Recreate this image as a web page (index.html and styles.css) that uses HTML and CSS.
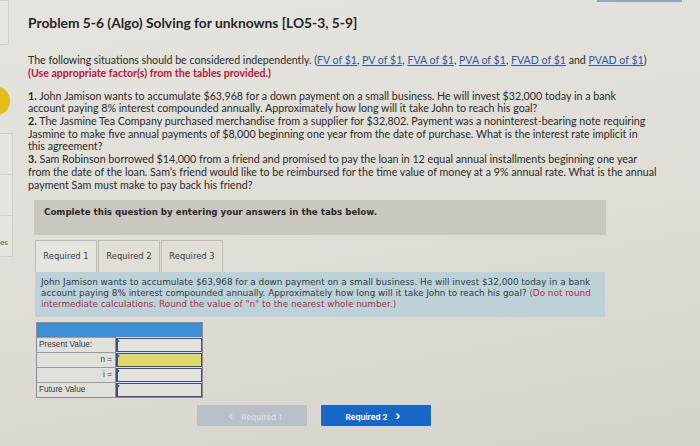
FILE: index.html
```html
<!DOCTYPE html>
<html>
<head>
<meta charset="utf-8">
<link rel="stylesheet" href="styles.css">
</head>
<body>
<div class="page">
  <div class="side">
    <div class="side-top"></div>
    <div class="side-dot"></div>
    <div class="side-panel">
      <div class="side-seg"></div>
      <div class="side-seg"></div>
      <div class="side-seg last"><span>es</span></div>
    </div>
  </div>
  <div class="main">
    <div class="topbar"></div>
    <h1 class="title">Problem 5-6 (Algo) Solving for unknowns [LO5-3, 5-9]</h1>
    <p class="intro">The following situations should be considered independently. (<a href="#">FV of $1</a>, <a href="#">PV of $1</a>, <a href="#">FVA of $1</a>, <a href="#">PVA of $1</a>, <a href="#">FVAD of $1</a> and <a href="#">PVAD of $1</a>)<br><strong class="red">(Use appropriate factor(s) from the tables provided.)</strong></p>
    <p class="items"><b>1.</b> John Jamison wants to accumulate $63,968 for a down payment on a small business. He will invest $32,000 today in a bank<br>account paying 8% interest compounded annually. Approximately how long will it take John to reach his goal?<br><b>2.</b> The Jasmine Tea Company purchased merchandise from a supplier for $32,802. Payment was a noninterest-bearing note requiring<br>Jasmine to make five annual payments of $8,000 beginning one year from the date of purchase. What is the interest rate implicit in<br>this agreement?<br><b>3.</b> Sam Robinson borrowed $14,000 from a friend and promised to pay the loan in 12 equal annual installments beginning one year<br>from the date of the loan. Sam’s friend would like to be reimbursed for the time value of money at a 9% annual rate. What is the annual<br>payment Sam must make to pay back his friend?</p>
    <div class="prompt">Complete this question by entering your answers in the tabs below.</div>
    <div class="tabs">
      <div class="tab active">Required 1</div>
      <div class="tab">Required 2</div>
      <div class="tab">Required 3</div>
    </div>
    <div class="question">John Jamison wants to accumulate $63,968 for a down payment on a small business. He will invest $32,000 today in a bank<br>account paying 8% interest compounded annually. Approximately how long will it take John to reach his goal? <span class="red">(Do not round<br>intermediate calculations. Round the value of "n" to the nearest whole number.)</span></div>
    <div class="grid">
      <div class="ghead"></div>
      <div class="glabel">Present Value:</div><div class="gcell"></div>
      <div class="glabel right">n =</div><div class="gcell yellow"></div>
      <div class="glabel right">i =</div><div class="gcell"></div>
      <div class="glabel">Future Value</div><div class="gcell"></div>
    </div>
    <div class="nav">
      <div class="btn disabled"><span class="chev">&lsaquo;</span> Required 1</div>
      <div class="btn primary">Required 2 <span class="chev">&rsaquo;</span></div>
    </div>
  </div>
</div>
</body>
</html>
```
FILE: styles.css
```css
html, body {
  margin: 0;
  padding: 0;
}
body {
  width: 700px;
  height: 446px;
  overflow: hidden;
  background: linear-gradient(170deg, #e6e4de 0%, #dedcd5 60%, #d6d3cb 100%);
  font-family: Lato, "Liberation Sans", sans-serif;
  color: #2b2b2b;
}
.page {
  display: flex;
  height: 446px;
}
.side {
  width: 28px;
  flex: none;
  display: flex;
  flex-direction: column;
  align-items: flex-start;
}
.side-top {
  width: 8px;
  height: 43px;
  border: 1px solid #cfcdc6;
  border-left: none;
  background: #e9e7e2;
  border-radius: 0 0 3px 0;
}
.side-dot {
  width: 26px;
  height: 28px;
  flex: none;
  border-radius: 50%;
  background: #e3bc18;
  margin: 42px 0 0 -16px;
}
.side-panel {
  margin-top: 18px;
  width: 12px;
  border: 1px solid #d2d0c9;
  border-left: none;
  background: #e6e4de;
}
.side-seg {
  height: 40px;
  border-bottom: 1px solid #d6d4cd;
}
.side-seg.last {
  border-bottom: none;
  height: 40px;
  position: relative;
}
.side-seg span {
  position: absolute;
  left: 0;
  top: 23px;
  font-size: 7px;
  color: #555;
  font-family: "DejaVu Sans", sans-serif;
}
.main {
  flex: 1;
  min-width: 0;
  position: relative;
}
.topbar {
  position: absolute;
  left: 569px;
  top: 0;
  width: 85px;
  height: 2px;
  background: #8fa6bd;
}
.title {
  margin: 14px 0 0 0;
  font-size: 13.8px;
  font-weight: 700;
  line-height: 18px;
  color: #262626;
}
.intro {
  margin: 22px 0 0 0;
  font-size: 10.6px;
  line-height: 12.8px;
}
.intro a {
  color: #33589e;
  text-decoration: underline;
}
.red {
  color: #b3203a;
}
.intro .red {
  font-weight: 700;
}
.items {
  margin: 10px 0 0 0;
  font-size: 10.7px;
  line-height: 12.7px;
}
.items b {
  font-weight: 700;
}
.prompt {
  margin: 9px 0 0 6px;
  width: 572px;
  height: 35px;
  box-sizing: border-box;
  background: #c9c7c0;
  padding: 7px 0 0 10px;
  font-family: "DejaVu Sans", sans-serif;
  font-size: 8.7px;
  font-weight: 700;
  color: #2a2a2a;
}
.tabs {
  display: flex;
  margin: 5px 0 0 7px;
  height: 32px;
}
.tab {
  width: 62px;
  box-sizing: border-box;
  border: 1px solid #bcbab3;
  border-bottom: none;
  background: #e0ded7;
  font-family: "DejaVu Sans", sans-serif;
  font-size: 8.4px;
  color: #3a3a3a;
  text-align: center;
  line-height: 31px;
  margin-right: 1px;
}
.tab.active {
  background: #e6e4de;
}
.question {
  margin: 0 0 0 7px;
  width: 570px;
  height: 45px;
  box-sizing: border-box;
  background: #bcd2d8;
  padding: 5px 0 0 6px;
  font-family: "DejaVu Sans", sans-serif;
  font-size: 8.85px;
  line-height: 11px;
  color: #2f3a44;
}
.question .red {
  color: #b02a43;
}
.grid {
  margin: 5px 0 0 8px;
  width: 167px;
  display: grid;
  grid-template-columns: 79px 86px;
  grid-template-rows: 14px 15px 15px 15px 15px;
  border: 1px solid #8b8c90;
  box-sizing: border-box;
  background: #e2e0da;
}
.ghead {
  grid-column: 1 / 3;
  background: #3a8fd6;
}
.glabel {
  border-top: 1px solid #9a9a9c;
  border-right: 1px solid #8e8f93;
  font-family: "Liberation Sans", Arial, sans-serif;
  font-size: 8.2px;
  line-height: 14px;
  padding-left: 2px;
  color: #3a3a3a;
  box-sizing: border-box;
}
.glabel.right {
  text-align: right;
  padding-right: 3px;
}
.gcell {
  border: 1px solid #3d4f86;
  border-left-width: 2px;
  margin: 1px 0 0 0;
  box-sizing: border-box;
  background: #e4e2dc;
  position: relative;
}
.gcell::before {
  content: "";
  position: absolute;
  left: -1px;
  top: 0;
  border-left: 3px solid #2d5fb0;
  border-top: 2px solid transparent;
  border-bottom: 2px solid transparent;
}
.gcell.yellow {
  background: #dcd769;
}
.nav {
  display: flex;
  gap: 14px;
  margin: 7px 0 0 169px;
}
.btn {
  width: 110px;
  height: 21px;
  line-height: 21px;
  text-align: center;
  font-family: Inter, "DejaVu Sans", sans-serif;
  font-size: 8px;
  font-weight: 700;
  border-radius: 1px;
}
.btn.disabled {
  background: #b9c0c8;
  color: #d6dbe0;
}
.btn.primary {
  background: #1767c6;
  color: #f4f7fb;
}
.chev {
  font-size: 12px;
  margin: 0 6px;
}
```
